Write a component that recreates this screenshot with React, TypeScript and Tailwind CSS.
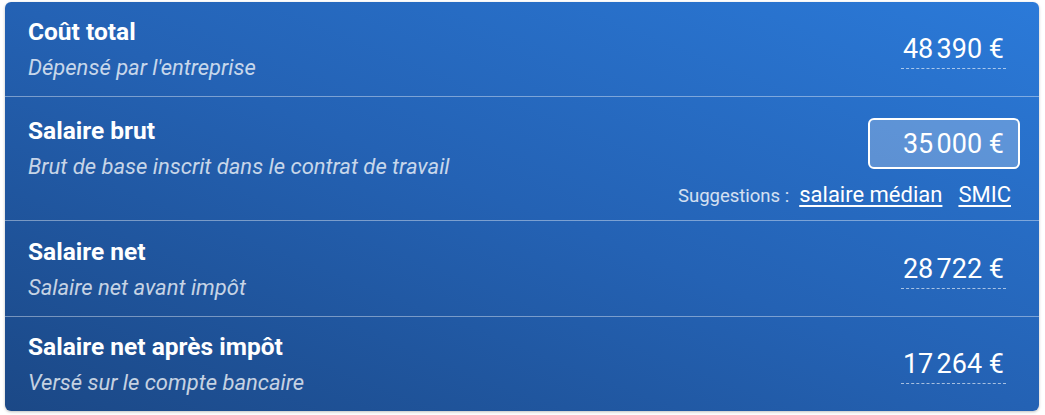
import React, { useState } from "react";

interface Row {
  title: string;
  subtitle: string;
  value: string;
}

const ROWS: Row[] = [
  { title: "Coût total", subtitle: "Dépensé par l'entreprise", value: "48\u202f390 €" },
  { title: "Salaire brut", subtitle: "Brut de base inscrit dans le contrat de travail", value: "35\u202f000 €" },
  { title: "Salaire net", subtitle: "Salaire net avant impôt", value: "28\u202f722 €" },
  { title: "Salaire net après impôt", subtitle: "Versé sur le compte bancaire", value: "17\u202f264 €" },
];

function Label({ title, subtitle }: { title: string; subtitle: string }) {
  return (
    <div className="flex flex-col gap-[8px] mt-[2px]">
      <span className="text-[24.5px] leading-7 font-bold text-white">{title}</span>
      <span className="text-[22px] leading-7 italic text-white/75">{subtitle}</span>
    </div>
  );
}

function Value({ children }: { children: React.ReactNode }) {
  return (
    <span className="text-[27px] leading-8 text-white border-b border-dashed border-white/60 pb-[3px] mt-[4px] px-[2px]">
      {children}
    </span>
  );
}

export default function App() {
  const [brut, setBrut] = useState(ROWS[1].value);

  return (
    <div className="w-[1045px] h-[415px] bg-white p-[2px_6px_4px_5px] font-['Roboto',sans-serif]">
      <div className="h-full rounded-[6px] overflow-hidden bg-linear-to-tr from-[#1b4886] via-[#2462b4] to-[#2b7ad9] shadow-[0_1px_3px_rgba(0,0,0,0.25)] flex flex-col divide-y divide-white/40">
        {/* Coût total */}
        <div className="h-[95px] flex items-center justify-between pl-[23px] pr-[33px]">
          <Label title={ROWS[0].title} subtitle={ROWS[0].subtitle} />
          <Value>{ROWS[0].value}</Value>
        </div>

        {/* Salaire brut */}
        <div className="h-[124px] flex items-start justify-between pl-[23px] pr-[28px]">
          <div className="pt-[18px]">
            <Label title={ROWS[1].title} subtitle={ROWS[1].subtitle} />
          </div>
          <div className="flex flex-col items-end gap-[9px] pt-[21px]">
            <input
              value={brut}
              onChange={(e) => setBrut(e.target.value)}
              className="w-[152px] h-[51px] mr-[-9px] rounded-[6px] border-2 border-white bg-white/25 text-right pr-[14px] text-[27px] text-white outline-none"
            />
            <div className="flex items-baseline gap-[10px] text-white">
              <span className="text-[18.5px] text-white/80">Suggestions :</span>
              <a href="#" className="text-[22px] underline underline-offset-[3px]">salaire médian</a>
              <a href="#" className="text-[22px] underline underline-offset-[3px] ml-[6px]">SMIC</a>
            </div>
          </div>
        </div>

        {/* Salaire net */}
        <div className="h-[96px] flex items-center justify-between pl-[23px] pr-[33px]">
          <Label title={ROWS[2].title} subtitle={ROWS[2].subtitle} />
          <Value>{ROWS[2].value}</Value>
        </div>

        {/* Salaire net après impôt */}
        <div className="flex-1 flex items-center justify-between pl-[23px] pr-[33px]">
          <Label title={ROWS[3].title} subtitle={ROWS[3].subtitle} />
          <Value>{ROWS[3].value}</Value>
        </div>
      </div>
    </div>
  );
}
